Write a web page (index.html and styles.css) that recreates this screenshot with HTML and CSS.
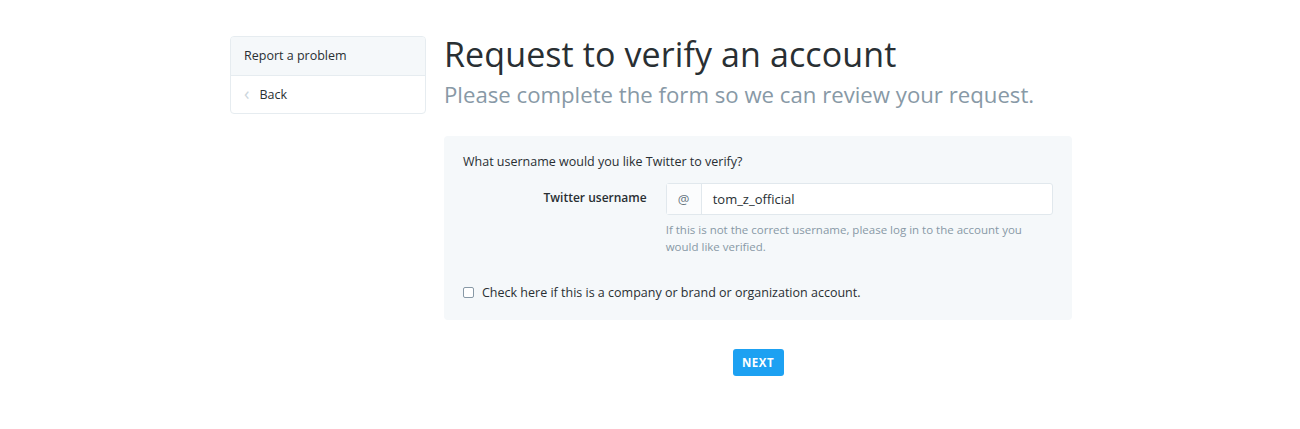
FILE: index.html
```html
<!DOCTYPE html>
<html>
<head>
<meta charset="utf-8">
<link rel="stylesheet" href="styles.css">
</head>
<body>
<div class="page">
  <aside class="side">
    <div class="side-item side-head">Report a problem</div>
    <div class="side-item side-back"><span class="chev">&lsaquo;</span>Back</div>
  </aside>
  <main class="main">
    <h1 class="title">Request to verify an account</h1>
    <p class="subtitle">Please complete the form so we can review your request.</p>
    <section class="panel">
      <p class="q">What username would you like Twitter to verify?</p>
      <div class="row">
        <label class="lbl">Twitter username</label>
        <div class="field">
          <div class="group">
            <span class="addon">@</span>
            <span class="input">tom_z_official</span>
          </div>
          <p class="help">If this is not the correct username, please log in to the account you would like verified.</p>
        </div>
      </div>
      <label class="check"><span class="box"></span>Check here if this is a company or brand or organization account.</label>
    </section>
    <div class="actions"><button class="next">NEXT</button></div>
  </main>
</div>
</body>
</html>
```
FILE: styles.css
```css
html, body { margin: 0; padding: 0; background: #fff; }
body { font-family: "Open Sans", "Liberation Sans", sans-serif; color: #292f33; }
.page { width: 844px; box-sizing: border-box; padding-left: 2px; margin: 0 auto; padding-top: 36px; display: flex; gap: 18px; align-items: flex-start; }
.side { width: 196px; flex: none; border: 1px solid #e6ecf0; border-radius: 4px; overflow: hidden; box-sizing: border-box; }
.side-item { height: 39px; box-sizing: border-box; display: flex; align-items: center; padding-left: 13px; padding-bottom: 1px; font-size: 12.5px; }
.side-head { background: #f5f8fa; border-bottom: 1px solid #e6ecf0; color: #292f33; }
.side-back { color: #292f33; height: 37px; }
.chev { color: #ccd6dd; font-size: 18px; margin-right: 10px; line-height: 1; position: relative; top: -1px; }
.main { width: 628px; flex: none; padding-top: 1px; }
.title { margin: 0; font-size: 34px; font-weight: 400; line-height: 34px; color: #292f33; letter-spacing: 0.1px; }
.subtitle { margin: 11px 0 0; font-size: 22.2px; line-height: 26px; color: #8899a6; font-weight: 400; }
.panel { margin-top: 28px; background: #f5f8fa; border-radius: 4px; padding: 17px 19px 21px; height: 184px; box-sizing: border-box; }
.q { margin: 0; font-size: 12.5px; line-height: 18px; }
.row { display: flex; margin-top: 12px; }
.lbl { width: 184px; text-align: right; font-weight: 600; font-size: 12px; padding-top: 6px; line-height: 18px; }
.field { margin-left: 19px; width: 388px; }
.group { display: flex; height: 32px; border: 1px solid #e1e8ed; border-radius: 3px; background: #fff; box-sizing: border-box; }
.addon { width: 34px; border-right: 1px solid #e1e8ed; display: flex; align-items: center; justify-content: center; font-size: 13px; color: #66757f; background: #fbfcfd; }
.input { display: flex; align-items: center; padding-left: 11px; font-size: 13px; color: #292f33; }
.help { margin: 6px 0 0; font-size: 11.5px; line-height: 17px; color: #8899a6; width: 370px; }
.check { display: flex; align-items: center; margin-top: 29px; font-size: 12.5px; color: #292f33; }
.box { width: 9px; height: 9px; border: 1px solid #8899a6; border-radius: 2px; background: #fff; margin-right: 8px; }
.actions { display: flex; justify-content: center; margin-top: 29px; }
.next { background: #1da1f2; color: #fff; border: none; border-radius: 3px; width: 51px; height: 27px; font-family: "Open Sans", "Liberation Sans", sans-serif; font-weight: 700; font-size: 11.5px; letter-spacing: 0.5px; padding: 0; }
```
